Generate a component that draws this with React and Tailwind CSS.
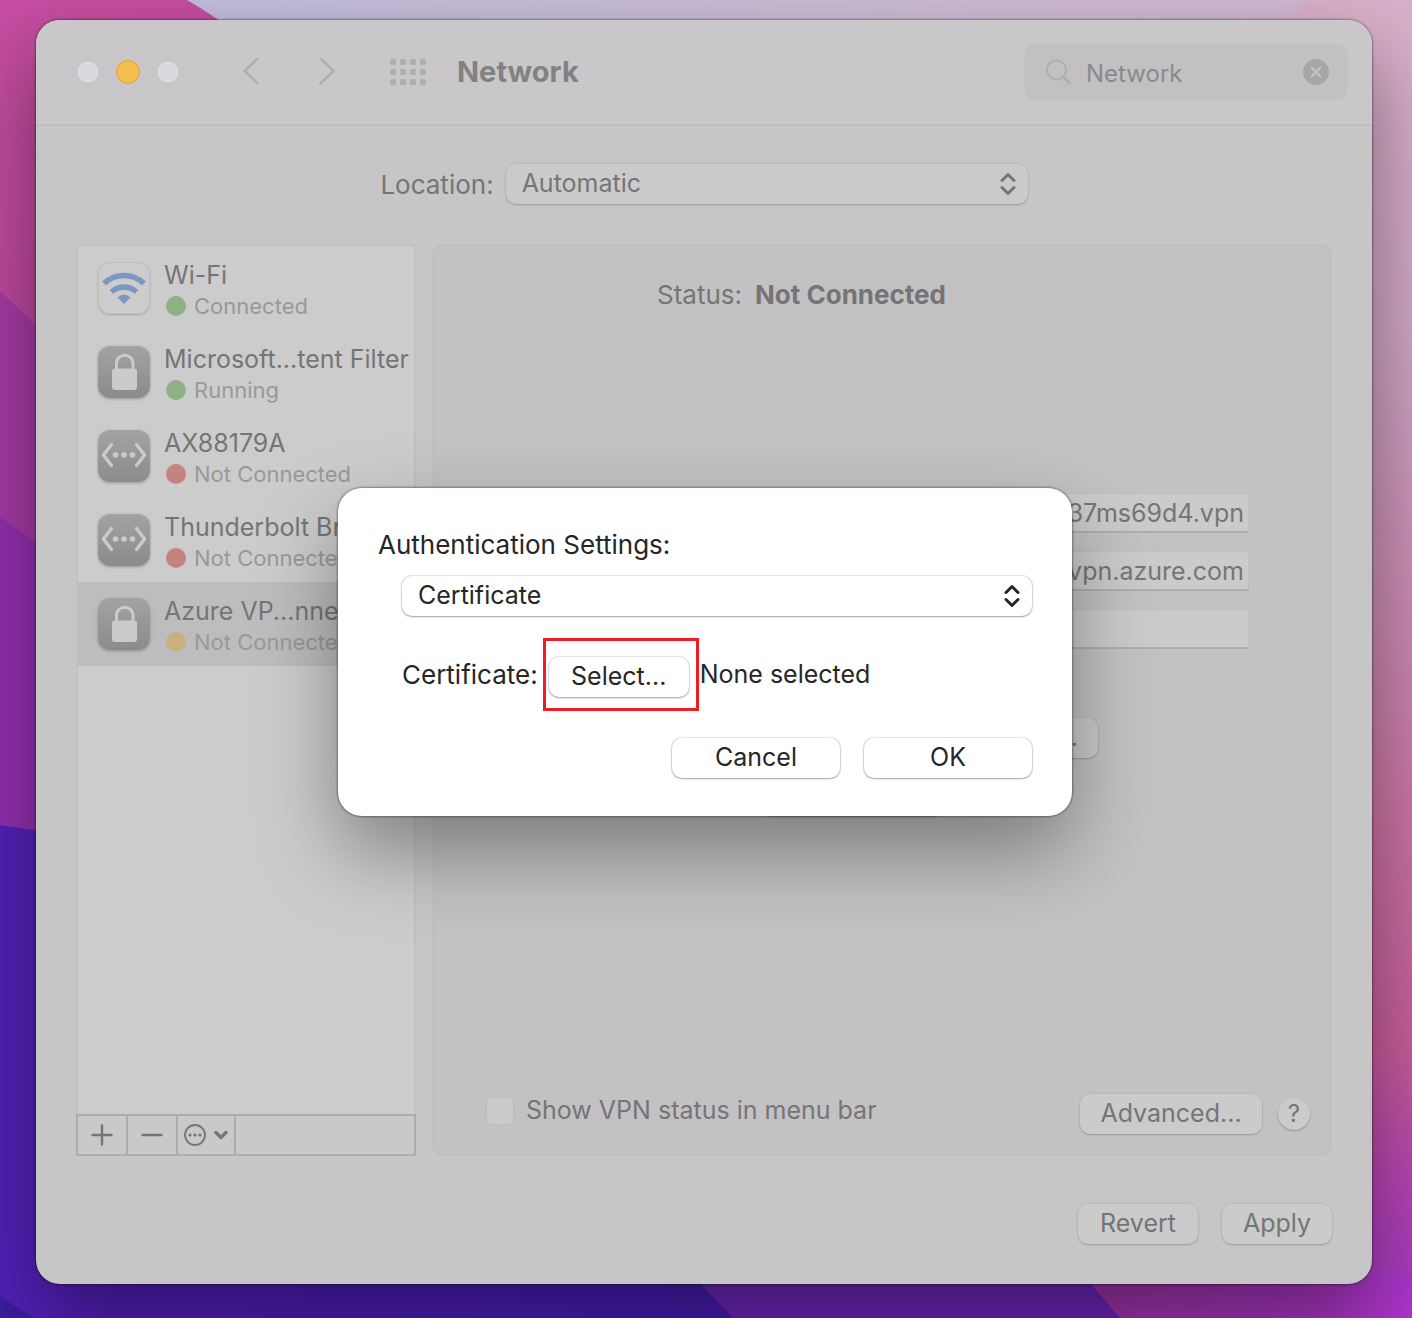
import React from "react";

const shadowBtn =
  "rounded-[10px] bg-[#cbcbcb] text-[25px] text-[#757575] shadow-[0_0_1px_1px_rgba(0,0,0,0.04),0_1px_2px_rgba(0,0,0,0.18)]";
const sheetBtn =
  "h-10 rounded-[10px] bg-white text-[25px] text-[#262626] shadow-[0_0_1px_1px_rgba(0,0,0,0.1),0_1px_2px_rgba(0,0,0,0.3)]";

function Wallpaper() {
  return (
    <svg
      className="absolute inset-0 h-full w-full"
      viewBox="0 0 1412 1318"
      preserveAspectRatio="none"
      aria-hidden="true"
    >
      <defs>
        <linearGradient id="sky" x1="0" y1="0" x2="1" y2="0">
          <stop offset="0.15" stopColor="#c2bddb" />
          <stop offset="0.6" stopColor="#cbbcd6" />
          <stop offset="1" stopColor="#d3b6d2" />
        </linearGradient>
        <linearGradient id="right" x1="0" y1="0" x2="0" y2="1">
          <stop offset="0" stopColor="#d9b0c9" />
          <stop offset="0.25" stopColor="#cfa6c4" />
          <stop offset="0.5" stopColor="#cb86ae" />
          <stop offset="0.62" stopColor="#ca74a2" />
          <stop offset="0.8" stopColor="#c65c9c" />
          <stop offset="0.9" stopColor="#b444b2" />
          <stop offset="1" stopColor="#a535c8" />
        </linearGradient>
        <linearGradient id="pink" x1="0" y1="0" x2="0" y2="1">
          <stop offset="0" stopColor="#c64ea2" />
          <stop offset="1" stopColor="#ba469e" />
        </linearGradient>
        <linearGradient id="indigo" x1="0" y1="0" x2="1" y2="0">
          <stop offset="0" stopColor="#5520ba" />
          <stop offset="1" stopColor="#451cb0" />
        </linearGradient>
        <linearGradient id="magenta" x1="0" y1="0" x2="1" y2="0">
          <stop offset="0" stopColor="#9c34a2" />
          <stop offset="1" stopColor="#ac36cc" />
        </linearGradient>
      </defs>
      <rect width="1412" height="1318" fill="url(#sky)" />
      <path d="M1306 0H1412V1318H900V400Z" fill="url(#right)" />
      <path d="M0 0H187Q215 16 240 36V400H0Z" fill="url(#pink)" />
      <path d="M0 292Q20 307 60 352V700H0Z" fill="#a63aa6" />
      <path d="M0 517Q20 530 60 562V900H0Z" fill="#9230b0" />
      <path d="M0 825L60 834V1200H740V1318H0Z" fill="url(#indigo)" />
      <path d="M0 1296L33 1318H0Z" fill="#3a1f9e" />
      <path d="M620 1200L733 1318H1140V1200Z" fill="#6c26b8" />
      <path d="M1020 1200L1120 1318H1412V1278L1300 1276Z" fill="url(#magenta)" />
    </svg>
  );
}

function UpDown({ className }) {
  return (
    <svg
      className={className}
      width="16"
      height="24"
      viewBox="0 0 16 24"
      fill="none"
      stroke="currentColor"
      strokeWidth="3"
      strokeLinecap="round"
      strokeLinejoin="round"
      aria-hidden="true"
    >
      <path d="M2 8.5L8 2.5L14 8.5M2 15.5L8 21.5L14 15.5" />
    </svg>
  );
}

function WifiIcon() {
  return (
    <svg width="52" height="52" viewBox="0 0 52 52" fill="none" aria-hidden="true">
      <path d="M6 21.5A29 29 0 0 1 46 21.5" stroke="#7b98c4" strokeWidth="5.6" />
      <path d="M13.5 30A18.5 18.5 0 0 1 38.5 30" stroke="#7b98c4" strokeWidth="5.6" />
      <path d="M19.5 35.500Q26 29.500 32.500 35.500L26 42Z" fill="#7b98c4" />
    </svg>
  );
}

function LockIcon() {
  return (
    <svg width="52" height="52" viewBox="0 0 52 52" fill="none" aria-hidden="true">
      <path d="M18.5 25V18C18.5 6.200 35 6.200 35 18V25" stroke="#cbcbcb" strokeWidth="3" />
      <rect x="14" y="22.500" width="25" height="21.500" rx="3" fill="#cbcbcb" />
    </svg>
  );
}

function EthernetIcon() {
  return (
    <svg width="52" height="52" viewBox="0 0 52 52" fill="none" aria-hidden="true">
      <path
        d="M13.500 14.500L5.500 25L13.500 35.500M38.500 14.500L46.500 25L38.500 35.500"
        stroke="#cbcbcb"
        strokeWidth="3.400"
        strokeLinecap="round"
        strokeLinejoin="round"
      />
      <g fill="#cbcbcb">
        <circle cx="17.500" cy="25" r="2.800" />
        <circle cx="26" cy="25" r="2.800" />
        <circle cx="34.500" cy="25" r="2.800" />
      </g>
    </svg>
  );
}

const icons = { wifi: WifiIcon, lock: LockIcon, ethernet: EthernetIcon };

const services = [
  { name: "Wi-Fi", status: "Connected", dot: "bg-[#8cb184]", icon: "wifi" },
  { name: "Microsoft...tent Filter", status: "Running", dot: "bg-[#8cb184]", icon: "lock" },
  { name: "AX88179A", status: "Not Connected", dot: "bg-[#c4837e]", icon: "ethernet" },
  { name: "Thunderbolt Bridge", status: "Not Connected", dot: "bg-[#c4837e]", icon: "ethernet" },
  { name: "Azure VP...nnection", status: "Not Connected", dot: "bg-[#c9b07f]", icon: "lock", selected: true },
];

function Service({ name, status, dot, icon, selected }) {
  const Icon = icons[icon];
  return (
    <li>
      <button
        type="button"
        aria-pressed={!!selected}
        className={`flex h-[84px] w-full items-center gap-[14px] overflow-hidden pl-5 text-left ${selected ? "bg-[#bdbdbd]" : ""}`}
      >
        <span
          className={`size-[52px] shrink-0 rounded-xl ${
            icon === "wifi"
              ? "bg-[#cccccc] shadow-[inset_0_0_0_1px_#bfbfbf,0_1px_2px_rgba(0,0,0,0.2)]"
              : "bg-linear-to-b from-[#a3a3a3] to-[#8b8b8b] shadow-[0_1px_3px_rgba(0,0,0,0.25)]"
          }`}
        >
          <Icon />
        </span>
        <span className="flex flex-col pt-1 whitespace-nowrap">
          <span className="text-[25px] leading-8 text-[#757575]">{name}</span>
          <span className="flex items-center gap-2 text-[22px] leading-[30px] text-[#999999]">
            <span className={`ml-0.5 size-5 rounded-full ${dot}`} />
            {status}
          </span>
        </span>
      </button>
    </li>
  );
}

function TitleBar() {
  return (
    <header className="flex h-[106px] items-center border-b-2 border-[#bfbcbf] bg-[#cac7ca] pr-6 pl-10">
      <div className="flex gap-4">
        <button type="button" aria-label="Close" className="size-6 rounded-full border border-[#c2bec2] bg-[#dcd8df]" />
        <button type="button" aria-label="Minimize" className="size-6 rounded-full border border-[#dc9f3c] bg-[#f5bf4f]" />
        <button type="button" aria-label="Zoom" className="size-6 rounded-full border border-[#c2bec2] bg-[#dcd8df]" />
      </div>
      <nav className="ml-[63px] flex items-center text-[#b0aeb0]">
        <button type="button" aria-label="Back">
          <svg width="16" height="28" viewBox="0 0 16 28" fill="none" stroke="currentColor" strokeWidth="2.600" strokeLinecap="round" strokeLinejoin="round">
            <path d="M14.500 0.500L1.500 13L14.500 25.500" />
          </svg>
        </button>
        <button type="button" aria-label="Forward" className="ml-[60px]">
          <svg width="16" height="28" viewBox="0 0 16 28" fill="none" stroke="currentColor" strokeWidth="2.600" strokeLinecap="round" strokeLinejoin="round">
            <path d="M1.500 0.500L14.500 13L1.500 25.500" />
          </svg>
        </button>
        <button type="button" aria-label="Show All" className="ml-[55px]">
          <svg width="36" height="26" viewBox="0 0 36 26" fill="currentColor">
            {[0, 10, 20].map((y) =>
              [0, 10, 20, 30].map((x) => <rect key={`${x}-${y}`} x={x} y={y} width="6" height="6" rx="1.500" />)
            )}
          </svg>
        </button>
      </nav>
      <h1 className="ml-[31px] text-[29px] font-bold text-[#838283]">Network</h1>
      <div className="ml-auto flex h-14 w-[324px] items-center rounded-xl bg-[#c3c0c3] pr-[19px] pl-[22px]">
        <svg width="26" height="26" viewBox="0 0 26 26" fill="none" stroke="#b0aeb0" strokeLinecap="round" aria-hidden="true">
          <circle cx="10.500" cy="11" r="9.500" strokeWidth="2" />
          <path d="M18 18.500L23.500 24" strokeWidth="3" />
        </svg>
        <input
          type="text"
          aria-label="Search"
          defaultValue="Network"
          className="ml-[14px] w-0 flex-1 bg-transparent pt-1 text-2xl text-[#8b898b] outline-none"
        />
        <button type="button" aria-label="Clear search">
          <svg width="26" height="26" viewBox="0 0 26 26" aria-hidden="true">
            <circle cx="13" cy="13" r="13" fill="#a8a7a8" />
            <path d="M8.500 8.500L17.500 17.500M17.500 8.500L8.500 17.500" stroke="#c6c3c6" strokeWidth="2.200" strokeLinecap="round" />
          </svg>
        </button>
      </div>
    </header>
  );
}

function Sidebar() {
  return (
    <aside className="flex w-[340px] shrink-0 flex-col">
      <ul className="flex-1 border-2 border-b-0 border-[#c1c1c1] bg-[#cccccc]">
        {services.map((s) => (
          <Service key={s.name} {...s} />
        ))}
      </ul>
      <div className="flex h-[42px] divide-x-2 divide-[#adadad] border-2 border-[#adadad] bg-[#c9c9c9] text-[#757575]">
        <button type="button" aria-label="Add service" className="flex w-[50px] items-center justify-center">
          <svg width="22" height="22" viewBox="0 0 22 22" stroke="currentColor" strokeWidth="2.400" strokeLinecap="round">
            <path d="M11 1.500V20.500M1.500 11H20.500" />
          </svg>
        </button>
        <button type="button" aria-label="Remove service" className="flex w-[50px] items-center justify-center">
          <svg width="22" height="22" viewBox="0 0 22 22" stroke="currentColor" strokeWidth="2.400" strokeLinecap="round">
            <path d="M1.500 11H20.500" />
          </svg>
        </button>
        <button type="button" aria-label="More actions" className="flex w-[58px] items-center justify-center gap-2">
          <svg width="22" height="22" viewBox="0 0 22 22" fill="currentColor">
            <circle cx="11" cy="11" r="10" fill="none" stroke="currentColor" strokeWidth="1.800" />
            <circle cx="6" cy="11" r="1.600" />
            <circle cx="11" cy="11" r="1.600" />
            <circle cx="16" cy="11" r="1.600" />
          </svg>
          <svg width="14" height="10" viewBox="0 0 14 10" fill="none" stroke="currentColor" strokeWidth="3.400" strokeLinecap="round" strokeLinejoin="round">
            <path d="M2 2.500L7 7.500L12 2.500" />
          </svg>
        </button>
        <span className="flex-1" />
      </div>
    </aside>
  );
}

const fields = [
  { label: "Server Address", value: "37ms69d4.vpn" },
  { label: "Remote ID", value: "vpn.azure.com" },
  { label: "Local ID", value: "" },
];

function Details() {
  return (
    <section className="ml-4 flex flex-1 flex-col rounded-xl border-2 border-[#c1bec1] bg-[#c4c1c4] text-[25px] text-[#757575]">
      <p className="mt-8 flex h-8 items-center pl-[223px] text-[26px]">
        <span>Status:</span>
        <strong className="ml-[13px] font-bold">Not Connected</strong>
      </p>
      <div className="mt-[183px] flex flex-col gap-[18px] pr-[81px]">
        {fields.map((f) => (
          <input
            key={f.label}
            type="text"
            aria-label={f.label}
            defaultValue={f.value}
            className="ml-auto h-10 w-[450px] border border-b-2 border-[#bebebe] border-b-[#aeaeae] bg-[#cbcbcb] pr-1 text-right outline-none"
          />
        ))}
      </div>
      <button
        type="button"
        aria-label="Authentication Settings"
        className={`mt-[69px] mr-[232px] h-10 w-[320px] self-end px-5 text-right ${shadowBtn}`}
      >
        ...
      </button>
      <button type="button" aria-label="Connect" className={`mt-[18px] ml-[328px] h-10 w-[182px] ${shadowBtn}`} />
      <div className="mt-auto mb-5 flex h-10 items-center pr-5 pl-[52px]">
        <label className="flex h-[34px] items-center gap-3 self-start">
          <input
            type="checkbox"
            className="size-7 appearance-none rounded-md bg-[#cbcbcb] shadow-[inset_0_0_0_1px_#bcbcbc]"
          />
          Show VPN status in menu bar
        </label>
        <button type="button" className={`ml-auto h-10 w-[182px] ${shadowBtn}`}>
          Advanced...
        </button>
        <button
          type="button"
          aria-label="Help"
          className="ml-4 size-8 rounded-full bg-[#cbcbcb] text-2xl leading-8 shadow-[0_1px_2px_rgba(0,0,0,0.25)]"
        >
          ?
        </button>
      </div>
    </section>
  );
}

function AuthSheet() {
  return (
    <div className="absolute inset-x-0 top-[468px] flex justify-center pl-0.5">
      <div
        role="dialog"
        aria-label="Authentication Settings"
        className="flex w-[734px] flex-col rounded-3xl bg-white px-10 pt-[39px] pb-[38px] text-[26px] text-[#262626] shadow-[0_0_2px_1px_rgba(0,0,0,0.35),0_36px_80px_rgba(0,0,0,0.36)]"
      >
        <label htmlFor="auth" className="h-9 leading-9">
          Authentication Settings:
        </label>
        <div className="mt-[13px] ml-6 grid items-center">
          <select
            id="auth"
            defaultValue="Certificate"
            className={`col-start-1 row-start-1 w-full appearance-none px-4 ${sheetBtn}`}
          >
            <option>Certificate</option>
          </select>
          <UpDown className="pointer-events-none col-start-1 row-start-1 mr-3 justify-self-end" />
        </div>
        <div className="mt-[22px] ml-6 flex items-center">
          <span id="cert-label">Certificate:</span>
          <div className="ml-[5px] h-[73px] w-[156px] border-3 border-[#ee1c25] px-[3px] py-[15px]">
            <button type="button" aria-describedby="cert-label" className={`w-[140px] ${sheetBtn}`}>
              Select...
            </button>
          </div>
          <span className="ml-px text-[25px]">None selected</span>
        </div>
        <div className="mt-[27px] flex justify-end gap-6">
          <button type="button" className={`w-[168px] ${sheetBtn}`}>
            Cancel
          </button>
          <button type="button" className={`w-[168px] ${sheetBtn}`}>
            OK
          </button>
        </div>
      </div>
    </div>
  );
}

export default function App() {
  return (
    <div className="relative flex min-h-screen flex-col overflow-hidden pt-5 pr-10 pb-[34px] pl-9 font-['Inter','Liberation_Sans',sans-serif]">
      <Wallpaper />
      <main className="relative flex flex-1 flex-col rounded-3xl bg-[#c6c6c6] shadow-[0_0_2px_1px_rgba(0,0,0,0.35),0_36px_80px_rgba(0,0,0,0.42)]">
        <div className="flex flex-1 flex-col overflow-hidden rounded-3xl">
          <TitleBar />
          <div className="mt-[38px] flex items-center justify-center text-[26px] text-[#757575]">
            <label htmlFor="location">Location:</label>
            <div className="ml-3 grid w-[522px] items-center">
              <select
                id="location"
                defaultValue="Automatic"
                className={`col-start-1 row-start-1 h-10 w-full appearance-none px-4 ${shadowBtn}`}
              >
                <option>Automatic</option>
              </select>
              <UpDown className="pointer-events-none col-start-1 row-start-1 mr-3 justify-self-end" />
            </div>
          </div>
          <div className="mt-10 flex flex-1 px-10">
            <Sidebar />
            <Details />
          </div>
          <footer className="mt-12 mb-10 flex justify-end gap-6 px-10">
            <button type="button" className={`h-10 w-[120px] ${shadowBtn}`}>
              Revert
            </button>
            <button type="button" className={`h-10 w-[110px] ${shadowBtn}`}>
              Apply
            </button>
          </footer>
        </div>
        <AuthSheet />
      </main>
    </div>
  );
}
